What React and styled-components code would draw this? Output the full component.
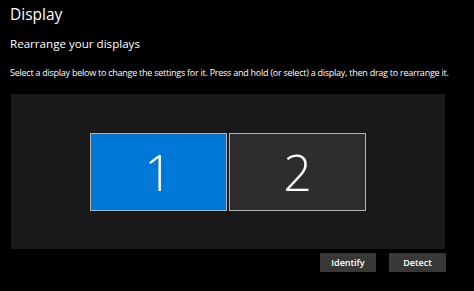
import styled, { createGlobalStyle } from "styled-components";

const GlobalStyle = createGlobalStyle`
  html, body {
    margin: 0;
    padding: 0;
    background: #000;
  }
  body {
    font-family: "Open Sans", "Noto Sans", sans-serif;
    color: #fff;
  }
`;

const Page = styled.div`
  width: 474px;
  height: 291px;
  background: #000;
  padding: 4px 0 0 9px;
  box-sizing: border-box;
  overflow: hidden;
`;

const Title = styled.h1`
  margin: 0 0 0 1px;
  font-size: 15.5px;
  font-weight: 400;
  line-height: 20px;
`;

const Subtitle = styled.h2`
  margin: 12px 0 0 1px;
  font-size: 11.6px;
  font-weight: 400;
  line-height: 16px;
`;

const Hint = styled.p`
  margin: 14px 0 0 1px;
  font-size: 9px;
  letter-spacing: -0.25px;
  line-height: 14px;
  white-space: nowrap;
`;

const Canvas = styled.div`
  margin: 14px 0 0 2px;
  width: 434px;
  height: 155px;
  background: #191919;
  display: flex;
  justify-content: center;
  align-items: center;
  gap: 2px;
  box-sizing: border-box;
`;

const Monitor = styled.div`
  width: 137px;
  height: 78px;
  box-sizing: border-box;
  border: 1px solid #b4b4b4;
  background: ${(p) => (p.$active ? "#0078d7" : "#2d2d2d")};
  display: flex;
  justify-content: center;
  align-items: center;
  font-size: 50px;
  font-weight: 300;
  line-height: 1;
  color: #fff;
`;

const Actions = styled.div`
  display: flex;
  justify-content: flex-end;
  gap: 13px;
  width: 437px;
  margin-top: 4px;
`;

const Button = styled.button`
  width: ${(p) => p.$w}px;
  height: 19px;
  border: none;
  background: #383838;
  color: #fff;
  font-family: "Open Sans", "Noto Sans", sans-serif;
  font-size: 9px;
  font-weight: 600;
  padding: 0;
`;

export default function App() {
  return (
    <Page>
      <GlobalStyle />
      <Title>Display</Title>
      <Subtitle>Rearrange your displays</Subtitle>
      <Hint>
        Select a display below to change the settings for it. Press and hold
        (or select) a display, then drag to rearrange it.
      </Hint>
      <Canvas>
        <Monitor $active>1</Monitor>
        <Monitor>2</Monitor>
      </Canvas>
      <Actions>
        <Button $w={56}>Identify</Button>
        <Button $w={57}>Detect</Button>
      </Actions>
    </Page>
  );
}
